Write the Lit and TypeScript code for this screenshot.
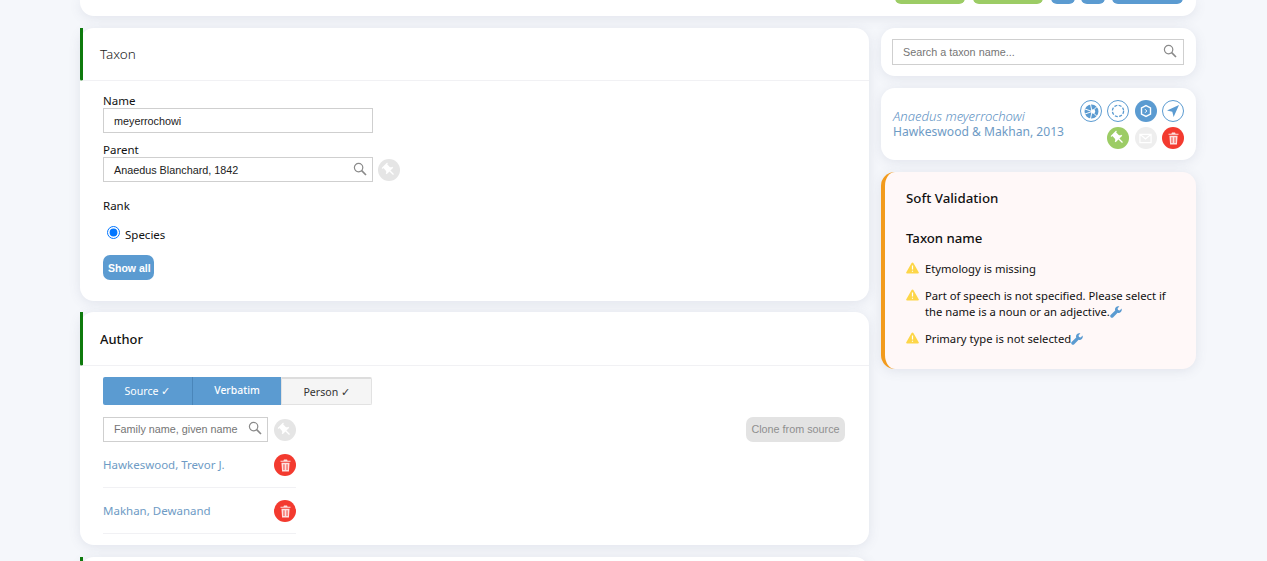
import { LitElement, html, css, svg } from "lit";
import { customElement } from "lit/decorators.js";

const PIN = svg`<path transform="rotate(-45 12 12)" d="M16 9V4h1c.55 0 1-.45 1-1s-.45-1-1-1H7c-.55 0-1 .45-1 1s.45 1 1 1h1v5c0 1.66-1.34 3-3 3v2h5.97v7l1 1 1-1v-7H19v-2c-1.66 0-3-1.34-3-3z"/>`;
const TRASH = svg`<path fill-rule="evenodd" d="M9.5 2.5h5l.8 1.8H20v1.8H4V4.300h4.700zM5.500 7.500h13L17.500 21.500h-11zm3.300 2.300v9.200h1.500V9.800zm4.900 0v9.200h1.500V9.800z"/>`;
const icon = (p: unknown, size = 16) =>
  html`<svg width=${size} height=${size} viewBox="0 0 24 24" fill="currentColor">${p}</svg>`;
const lens = html`<svg class="lens" width="14" height="14" viewBox="0 0 15 15" fill="none" stroke="#8a8a8a"><circle cx="6" cy="6" r="4.500" stroke-width="1.300"/><path d="M9.300 9.300l4.600 4.600" stroke-width="1.800"/></svg>`;
const warn = html`<svg class="warn" width="13" height="12" viewBox="0 0 13 12"><path d="M6.500.4c.4 0 .7.2.9.6l5.300 9.200c.4.7 0 1.400-.8 1.400H1.100c-.8 0-1.200-.7-.8-1.400L5.600 1c.2-.4.5-.6.9-.6z" fill="#fdd648"/><path d="M6.500 3.600v4M6.500 8.800v1" stroke="#fff" stroke-width="1.200"/></svg>`;
const wrench = html`<svg class="wrench" width="12" height="12" viewBox="0 0 12 12"><path d="M11.600 2.600 9.700 4.400 8 4 7.600 2.300 9.400.4C8 0 6.700.3 5.900 1.200 5 2.100 4.800 3.300 5.200 4.400L.6 9c-.6.6-.6 1.500 0 2.100l.3.3c.6.6 1.500.6 2.100 0l4.600-4.600c1.100.4 2.300.2 3.200-.7.9-.8 1.200-2.100.8-3.500z" fill="#5b9bd1"/></svg>`;

@customElement("app-root")
export class AppRoot extends LitElement {
  static styles = css`
    :host {
      display: block;
      height: 561px;
      overflow: hidden;
      background: #f5f7fb;
      font-family: "Noto Sans", "Open Sans", sans-serif;
      font-size: 12px;
      color: #111;
    }
    * { box-sizing: border-box; }
    .page { width: 1116px; margin-left: 80px; }
    .card {
      background: #fff;
      border-radius: 14px;
      box-shadow: 0 2px 12px rgba(90, 100, 130, 0.13);
    }
    .top {
      height: 16px;
      border-radius: 0 0 14px 14px;
      overflow: hidden;
      display: flex;
      justify-content: flex-end;
      align-items: flex-end;
      gap: 8px;
      padding: 0 13px 12px 0;
      margin-bottom: 12px;
    }
    .top span { height: 20px; border-radius: 6px; flex: none; background: #5b9bd1; }
    .top .g { background: #9ccc65; width: 70px; }
    .top .s { width: 24px; }
    .top .s + .s { margin-left: -2px; }
    .top .w { width: 71px; margin-left: -1px; }
    .cols { display: grid; grid-template-columns: 789px 315px; column-gap: 12px; align-items: start; }
    .main, .side { display: flex; flex-direction: column; }
    .main { gap: 11px; }
    .side { gap: 12px; }
    .head {
      height: 53px;
      display: flex;
      align-items: center;
      padding-left: 17px;
      font-size: 12.900px;
      font-weight: 500;
      border-left: 3px solid #0e7a0d;
      border-bottom: 1px solid #f1f1f4;
      border-radius: 0 0 0 2px;
    }
    .head.light { font-weight: 300; color: #222; font-size: 13.500px; }
    .taxon { height: 273px; }
    .author { height: 233px; }
    .author .head { height: 54px; }
    .next { height: 40px; margin-top: 1px; }
    .next .head { border-bottom: none; }
    .body { padding: 13px 0 0 23px; }
    label { display: block; font-size: 11.500px; line-height: 14px; }
    .input {
      display: flex;
      align-items: center;
      justify-content: space-between;
      height: 25px;
      width: 270px;
      padding: 0 5px 0 10px;
      border: 1px solid #cfcfcf;
      font-family: "Liberation Sans", Arial, sans-serif;
      font-size: 10.800px;
      color: #222;
      background: #fff;
      flex: none;
    }
    .input.ph { color: #757575; }
    .input.ph.short { width: 165px; padding-bottom: 1px; }
    .input.wide { width: 292px; height: 26px; padding-right: 6px; }
    .input .lens { flex: none; margin-top: -2px; }
    .field { margin-bottom: 10px; }
    .with-pin { display: flex; align-items: center; gap: 5px; }
    .with-pin .short + .circle { margin-left: 1px; }
    .circle {
      width: 22px;
      height: 22px;
      border-radius: 50%;
      display: flex;
      align-items: center;
      justify-content: center;
      flex: none;
      color: #fff;
    }
    .off { background: #e5e5e5; }
    .off.pale { background: #eeeeee; }
    .red { background: #f33a2f; }
    .red svg { opacity: 0.85; }
    .green { background: #9ccc65; }
    .blue { background: #5b9bd1; }
    .line { border: 1px solid #5b9bd1; color: #5b9bd1; background: #fff; }
    .rank { font-size: 11.500px; line-height: 14px; margin-top: 17px; }
    .radio { display: flex; align-items: center; margin: 12px 0 0 4px; height: 16px; }
    .radio input { margin: 0 5px 2px 0; width: 13px; height: 13px; flex: none; }
    .radio span { font-size: 11.500px; margin-top: 2px; }
    .show {
      margin-top: 14px;
      display: inline-flex;
      align-items: center;
      height: 25px;
      padding: 0 5px;
      width: 51px;
      border-radius: 7px;
      background: #5b9bd1;
      color: #fff;
      font-family: "Liberation Sans", Arial, sans-serif;
      font-weight: 700;
      font-size: 10.500px;
      white-space: nowrap;
    }
    .body.a { padding: 11px 24px 0 23px; }
    .tabs { display: flex; width: 269px; height: 28px; }
    .tab {
      flex: 1;
      display: flex;
      align-items: center;
      justify-content: center;
      background: #5b9bd1;
      color: #fff;
      font-size: 10.600px;
      font-family: "Noto Sans", sans-serif;
      padding-bottom: 1px;
    }
    .tab.first { border-radius: 2px 0 0 2px; }
    .tab + .tab { border-left: 1px solid #4a86ba; }
    .tab.bold { font-weight: 500; padding-bottom: 3px; font-size: 10.400px; }
    .tab.plain {
      background: #f5f5f5;
      color: #333;
      border: 1px solid #e2e2e2;
      border-top: 2px solid #ddd;
      border-radius: 0 2px 2px 0;
      padding-bottom: 0;
    }
    .search-row { display: flex; align-items: center; justify-content: space-between; margin-top: 12px; }
    .clone {
      height: 25px;
      width: 99px;
      padding-bottom: 1px;
      display: flex;
      align-items: center;
      justify-content: center;
      border-radius: 7px;
      background: #e3e3e3;
      color: #8f8f8f;
      font-family: "Liberation Sans", Arial, sans-serif;
      font-size: 10.800px;
      white-space: nowrap;
    }
    .list { width: 193px; }
    .row {
      height: 46px;
      padding-top: 1px;
      display: flex;
      align-items: center;
      justify-content: space-between;
      border-bottom: 1px solid #f1f1f4;
    }
    .row a { color: #6e9bc5; font-size: 11.500px; margin-top: -2px; }
    .search { height: 48px; padding: 11px 12px 11px 11px; display: flex; align-items: center; }
    .sum {
      height: 72px;
      padding: 0 12px;
      display: flex;
      align-items: center;
      justify-content: space-between;
    }
    .sum .name { color: #6e9bc5; font-size: 12.100px; line-height: 16px; white-space: nowrap; }
    .sum em { display: block; font-size: 13.100px; font-weight: 300; color: #5f93c4; }
    .icons { display: flex; flex-direction: column; align-items: flex-end; gap: 5px; margin-top: 1px; }
    .icons div { display: flex; gap: 5.300px; }
    .soft {
      height: 197px;
      background: #fff8f8;
      border-left: 4px solid #f29b1d;
      padding: 18px 20px 0 21px;
    }
    .soft h3 { margin: 0; font-size: 13.300px; font-weight: 500; line-height: 17px; }
    .soft h4 { margin: 23px 0 14px; font-size: 13.200px; font-weight: 500; line-height: 17px; }
    .soft ul { list-style: none; margin: 0; padding: 0; display: flex; flex-direction: column; gap: 10px; }
    .soft li { display: flex; gap: 6px; font-size: 11.250px; line-height: 16.500px; }
    .warn { flex: none; margin-top: 1px; }
    .wrench { vertical-align: -2px; }
  `;

  private sumIcons1() {
    return html`
      <span class="circle line"><svg width="15" height="15" viewBox="0 0 14 14" fill="#5b9bd1"><path fill-rule="evenodd" d="M7 .5a6.500 6.500 0 1 0 0 13 6.500 6.500 0 0 0 0-13zM8.500 5a2 2 0 1 1 0 4 2 2 0 0 1 0-4z"/><path d="M7.500 7 6 0M7.500 7 .5 4.500M7.500 7 .5 9.500M7.500 7 6 14M7.500 7l5 5M7.500 7l5-5" stroke="#fff" stroke-width=".9" fill="none"/></svg></span>
      <span class="circle line"><svg width="14" height="14" viewBox="0 0 14 14" fill="none" stroke="#5b9bd1" stroke-width="1.300"><circle cx="7" cy="7" r="5.600" stroke-dasharray="3 1.400"/></svg></span>
      <span class="circle blue"><svg width="14" height="14" viewBox="0 0 14 14" fill="none" stroke="#fff" stroke-width="1.400"><path d="M7 1.600 11.500 4v6L7 12.400 2.500 10V4z"/><path d="M6 5.200 7.800 7 6 8.800" stroke-width="1"/></svg></span>
      <span class="circle line"><svg width="14" height="14" viewBox="0 0 14 14" fill="#5b9bd1"><path d="M13 1 7.600 13 6.300 7.700 1 6.400z"/></svg></span>`;
  }

  render() {
    return html`
      <div class="page">
        <div class="card top"><span class="g"></span><span class="g"></span><span class="s"></span><span class="s"></span><span class="w"></span></div>
        <div class="cols">
          <div class="main">
            <section class="card taxon">
              <div class="head light">Taxon</div>
              <div class="body">
                <div class="field"><label>Name</label><div class="input">meyerrochowi</div></div>
                <div><label>Parent</label>
                  <div class="with-pin"><div class="input">Anaedus Blanchard, 1842 ${lens}</div><span class="circle off">${icon(PIN)}</span></div>
                </div>
                <div class="rank">Rank</div>
                <div class="radio"><input type="radio" checked /><span>Species</span></div>
                <div class="show">Show all</div>
              </div>
            </section>
            <section class="card author">
              <div class="head">Author</div>
              <div class="body a">
                <div class="tabs">
                  <div class="tab first">Source ✓</div>
                  <div class="tab bold">Verbatim</div>
                  <div class="tab plain">Person ✓</div>
                </div>
                <div class="search-row">
                  <div class="with-pin"><div class="input ph short">Family name, given name ${lens}</div><span class="circle off">${icon(PIN)}</span></div>
                  <div class="clone">Clone from source</div>
                </div>
                <div class="list">
                  <div class="row"><a>Hawkeswood, Trevor J.</a><span class="circle red">${icon(TRASH, 15)}</span></div>
                  <div class="row"><a>Makhan, Dewanand</a><span class="circle red">${icon(TRASH, 15)}</span></div>
                </div>
              </div>
            </section>
            <section class="card next"><div class="head"></div></section>
          </div>
          <div class="side">
            <section class="card search"><div class="input ph wide">Search a taxon name... ${lens}</div></section>
            <section class="card sum">
              <div class="name"><em>Anaedus meyerrochowi</em>Hawkeswood &amp; Makhan, 2013</div>
              <div class="icons">
                <div>${this.sumIcons1()}</div>
                <div>
                  <span class="circle green">${icon(PIN)}</span>
                  <span class="circle off pale"><svg width="13" height="13" viewBox="0 0 14 14" fill="none" stroke="#fff" stroke-width="1.300"><path d="M1 2.500h12v9H1zM1 2.500l6 5 6-5"/></svg></span>
                  <span class="circle red">${icon(TRASH, 15)}</span>
                </div>
              </div>
            </section>
            <section class="card soft">
              <h3>Soft Validation</h3>
              <h4>Taxon name</h4>
              <ul>
                <li>${warn}<span>Etymology is missing</span></li>
                <li>${warn}<span>Part of speech is not specified. Please select if the name is a noun or an adjective.${wrench}</span></li>
                <li>${warn}<span>Primary type is not selected${wrench}</span></li>
              </ul>
            </section>
          </div>
        </div>
      </div>
    `;
  }
}
